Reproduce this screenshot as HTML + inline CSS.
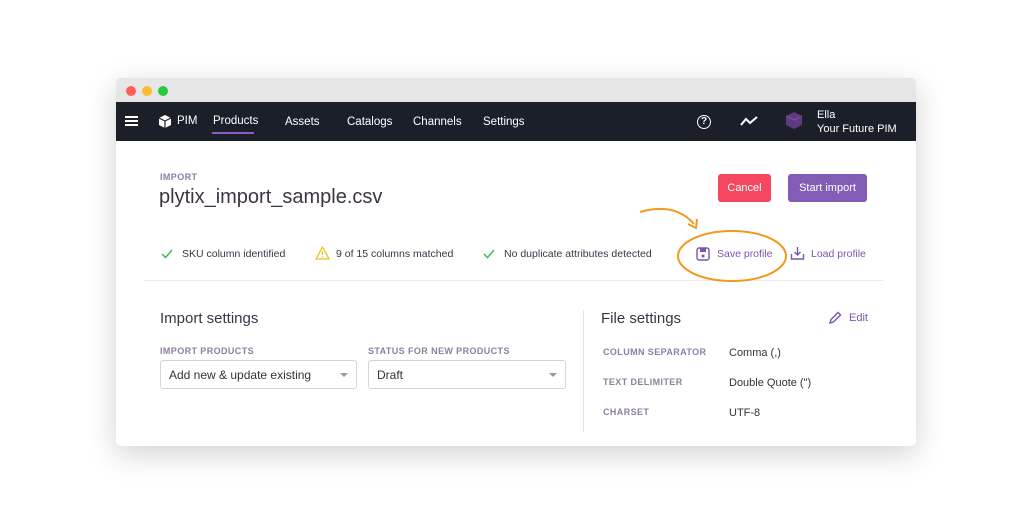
<!DOCTYPE html>
<html><head><meta charset="utf-8"><style>
*{margin:0;padding:0;box-sizing:border-box}
body{width:1032px;height:523px;background:#fff;font-family:"Liberation Sans",sans-serif;position:relative;overflow:hidden;color:#3d3345}
.a{position:absolute;white-space:nowrap}
.win{position:absolute;left:116px;top:78px;width:800px;height:368px;background:#fff;border-radius:5px;box-shadow:0 8px 30px rgba(0,0,0,.18);overflow:hidden}
.tb{position:absolute;left:0;top:0;width:800px;height:24px;background:#e6e6e6}
.dot{position:absolute;top:8px;width:10px;height:10px;border-radius:50%}
.nav{position:absolute;left:0;top:24px;width:800px;height:39px;background:#1b2028;color:#fff;font-size:11.5px}
.lbl{font-size:9px;font-weight:bold;color:#8d7ea0;letter-spacing:.4px}
.sel{position:absolute;height:29px;border:1px solid #d6d2da;border-radius:3px;font-size:12px;padding:7px 8px;color:#333}
.sel:after{content:"";position:absolute;right:8px;top:12px;border:4px solid transparent;border-top:4px solid #999}
.k{font-size:9px;font-weight:bold;color:#8d7ea0;letter-spacing:.4px}
.v{font-size:11px;color:#333}
.s{font-size:10.5px}
</style></head><body>
<div class="win">
<div class="tb"><div class="dot" style="left:10px;background:#fc5f57"></div><div class="dot" style="left:26px;background:#fdbc2e"></div><div class="dot" style="left:42px;background:#29c840"></div></div>
<div class="nav">
 <div class="a" style="left:9px;top:14px;width:13px;height:2px;background:#fff;box-shadow:0 4px 0 #fff,0 8px 0 #fff"></div>
 <svg class="a" style="left:42px;top:12px" width="14" height="15" viewBox="0 0 14 15"><path d="M7 1L13 4V11L7 14L1 11V4Z" fill="#fff"/><path d="M7 7V14M1 4L7 7L13 4" stroke="#1b2028" stroke-width="1.2" fill="none"/></svg>
 <div class="a" style="left:61px;top:13px">PIM</div>
 <div class="a" style="left:97px;top:13px">Products</div>
 <div class="a" style="left:96px;top:30px;width:42px;height:2px;background:#8a5cc7"></div>
 <div class="a" style="left:169px;top:14px">Assets</div>
 <div class="a" style="left:231px;top:14px">Catalogs</div>
 <div class="a" style="left:297px;top:14px">Channels</div>
 <div class="a" style="left:367px;top:14px">Settings</div>
 <div class="a" style="left:581px;top:13px;width:14px;height:14px;border:1.5px solid #fff;border-radius:50%;font-size:10px;font-weight:bold;text-align:center;line-height:11px">?</div>
 <svg class="a" style="left:624px;top:14px" width="18" height="10"><path d="M1 9L6 3L10 7L17 1" stroke="#fff" stroke-width="2" fill="none"/></svg>
 <svg class="a" style="left:669px;top:9px" width="18" height="19" viewBox="0 0 18 19"><path d="M9 1L17 5V14L9 18L1 14V5Z" fill="#5b3a7e"/><path d="M1 5L9 9L17 5" stroke="#7b55a5" fill="none"/></svg>
 <div class="a" style="left:701px;top:7px;font-size:11px">Ella</div>
 <div class="a" style="left:701px;top:21px;font-size:11px">Your Future PIM</div>
</div>
<div class="a lbl" style="left:44px;top:94px">IMPORT</div>
<div class="a" style="left:43px;top:108px;font-size:20px;color:#3d3345">plytix_import_sample.csv</div>
<div class="a" style="left:602px;top:96px;width:53px;height:28px;background:#f5475f;border-radius:3px;color:#fff;font-size:11px;text-align:center;line-height:28px">Cancel</div>
<div class="a" style="left:672px;top:96px;width:79px;height:28px;background:#835cb6;border-radius:3px;color:#fff;font-size:11px;text-align:center;line-height:28px">Start import</div>
<svg class="a" style="left:44px;top:170px" width="14" height="12"><path d="M2 6L5.5 9.5L12 2" stroke="#3cbf5a" stroke-width="1.5" fill="none"/></svg>
<div class="a s" style="left:66px;top:170px">SKU column identified</div>
<svg class="a" style="left:199px;top:168px" width="15" height="14"><path d="M7.5 1L14 13H1Z" stroke="#e8c21e" stroke-width="1.3" fill="none"/><path d="M7.5 5V9M7.5 10.5V11.5" stroke="#e8c21e" stroke-width="1.3"/></svg>
<div class="a s" style="left:220px;top:170px">9 of 15 columns matched</div>
<svg class="a" style="left:366px;top:170px" width="14" height="12"><path d="M2 6L5.5 9.5L12 2" stroke="#3cbf5a" stroke-width="1.5" fill="none"/></svg>
<div class="a s" style="left:388px;top:170px">No duplicate attributes detected</div>
<svg class="a" style="left:580px;top:169px" width="14" height="14"><rect x="1" y="1" width="12" height="12" rx="2" stroke="#7a55b0" stroke-width="1.4" fill="none"/><rect x="4" y="1" width="6" height="4" fill="#7a55b0"/><circle cx="7" cy="9" r="1.5" fill="#7a55b0"/></svg>
<div class="a s" style="left:601px;top:170px;color:#7a55b0">Save profile</div>
<svg class="a" style="left:674px;top:168px" width="15" height="15"><path d="M7.5 1V9M4.5 6L7.5 9L10.5 6M1.5 8V13H13.5V8" stroke="#7a55b0" stroke-width="1.4" fill="none"/></svg>
<div class="a s" style="left:695px;top:170px;color:#7a55b0">Load profile</div>
<div class="a" style="left:28px;top:202px;width:740px;height:1px;background:#ececec"></div>
<div class="a" style="left:44px;top:232px;font-size:15px">Import settings</div>
<div class="a lbl" style="left:44px;top:268px">IMPORT PRODUCTS</div>
<div class="a lbl" style="left:252px;top:268px">STATUS FOR NEW PRODUCTS</div>
<div class="sel" style="left:44px;top:282px;width:197px">Add new &amp; update existing</div>
<div class="sel" style="left:252px;top:282px;width:198px">Draft</div>
<div class="a" style="left:467px;top:232px;width:1px;height:122px;background:#e4e4e4"></div>
<div class="a" style="left:485px;top:232px;font-size:15px">File settings</div>
<svg class="a" style="left:712px;top:233px" width="14" height="14"><path d="M2 12L3 8.5L10 1.5L12.5 4L5.5 11Z" stroke="#7a55b0" stroke-width="1.4" fill="none"/></svg>
<div class="a" style="left:733px;top:234px;font-size:11px;color:#7a55b0">Edit</div>
<div class="a k" style="left:487px;top:269px">COLUMN SEPARATOR</div><div class="a v" style="left:613px;top:269px">Comma (,)</div>
<div class="a k" style="left:487px;top:299px">TEXT DELIMITER</div><div class="a v" style="left:613px;top:299px">Double Quote (")</div>
<div class="a k" style="left:487px;top:329px">CHARSET</div><div class="a v" style="left:613px;top:329px">UTF-8</div>
</div>
<svg class="a" style="left:0;top:0" width="1032" height="523"><ellipse cx="732" cy="256" rx="54" ry="25" stroke="#f39a1e" stroke-width="2" fill="none"/><path d="M640 212Q675 202 694 224" stroke="#f39a1e" stroke-width="2" fill="none"/><path d="M688 224L696 228L697 219" stroke="#f39a1e" stroke-width="2" fill="none"/></svg>
</body></html>
